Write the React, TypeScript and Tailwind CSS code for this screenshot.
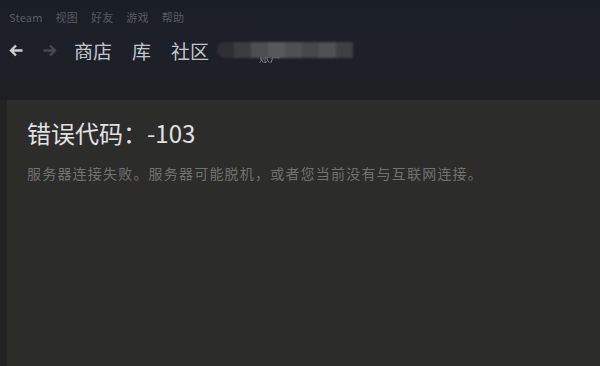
export default function App() {
  const menu = ["Steam", "视图", "好友", "游戏", "帮助"];
  const blur = ["#2f3034", "#3c3d41", "#4d4e52", "#57585b", "#4f5054", "#46474b", "#505155", "#3f4044"];

  return (
    <div
      className="flex h-[366px] w-[600px] flex-col overflow-hidden bg-[#1f1f21]"
      style={{ fontFamily: '"Microsoft YaHei", "Noto Sans CJK SC", "Liberation Sans", sans-serif' }}
    >
      <header className="bg-gradient-to-b from-[#1a1e26] via-[#1d2029] to-[#1f1f21] pb-[33px]">
        <nav className="flex h-[33px] items-center gap-[13px] pl-[9px] pt-[1px] text-[11px] text-[#575c64]">
          {menu.map((m) => (
            <span key={m} className="tracking-[0.2px]">
              {m}
            </span>
          ))}
        </nav>

        <div className="flex h-[34px] items-center">
          <div className="flex items-center gap-[18px] pl-[9px]">
            <svg width="15" height="13" viewBox="0 0 15 13" aria-hidden>
              <path d="M13.5 6.5H2.5M7 1.5L2 6.5l5 5" fill="none" stroke="#c9cdd2" strokeWidth="2.4" />
            </svg>
            <svg width="15" height="13" viewBox="0 0 15 13" aria-hidden>
              <path d="M1.5 6.5h11M8 1.5l5 5-5 5" fill="none" stroke="#46494e" strokeWidth="2.4" />
            </svg>
          </div>
          <div className="ml-[17px] flex items-center gap-[20px] text-[19px] leading-none text-[#c3c7cc]">
            <span>商店</span>
            <span>库</span>
            <span>社区</span>
          </div>
          <div className="relative ml-[8px] h-[34px] w-[142px]">
            <span className="absolute left-[42px] top-[16px] text-[11px] text-[#8a8c90] blur-[0.6px]">
              账户
            </span>
            <div className="absolute left-0 top-[9px] flex h-[16px] overflow-hidden rounded-l-full blur-[1px]">
              {blur.map((c, i) => (
                <div key={i} className="h-full w-[17px]" style={{ backgroundColor: c }} />
              ))}
            </div>
          </div>
        </div>
      </header>

      <div className="flex flex-1">
        <div className="w-[7px] bg-[#232323]" />
        <main className="flex-1 bg-[#2c2c2a] px-[20px] pt-[18px]">
          <h1 className="text-[24px] leading-[30px] text-[#e1e1e1]">错误代码：-103</h1>
          <p
            className="mt-[16px] text-[14px] leading-[18px] tracking-[1.2px] text-[#727270]"
            style={{ fontFamily: '"SimSun", "Noto Sans CJK SC", serif' }}
          >
            服务器连接失败。服务器可能脱机，或者您当前没有与互联网连接。
          </p>
        </main>
      </div>
    </div>
  );
}
